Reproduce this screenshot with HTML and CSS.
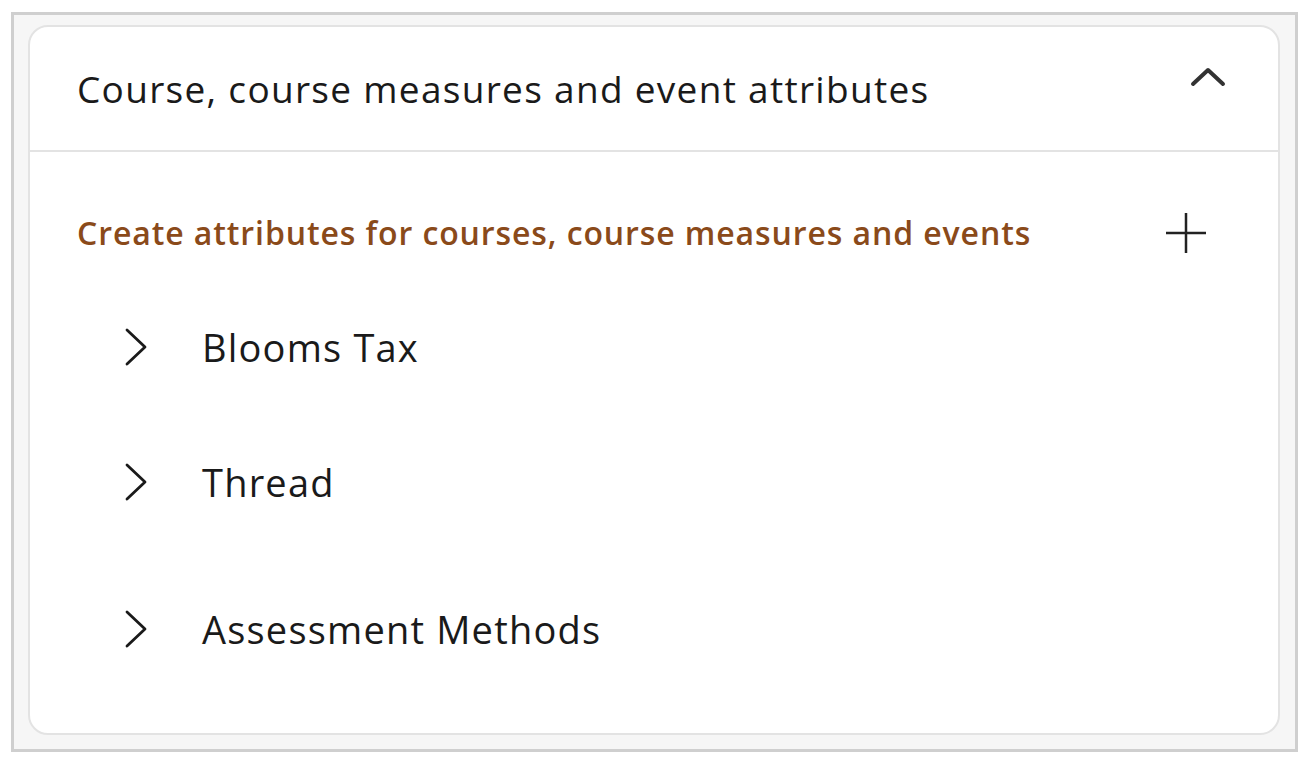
FILE: index.html
```html
<!DOCTYPE html>
<html>
<head>
<meta charset="utf-8">
<link rel="stylesheet" href="styles.css">
</head>
<body>
<div class="frame">
  <div class="card">
    <div class="card-header">
      <h2 class="title">Course, course measures and event attributes</h2>
      <svg class="chev-up" width="36" height="22" viewBox="0 0 36 22"><path d="M3 18 L18 4 L33 18" fill="none" stroke="#333" stroke-width="4" stroke-linecap="round" stroke-linejoin="round"/></svg>
    </div>
    <div class="card-body">
      <div class="sub-row">
        <span class="subtitle">Create attributes for courses, course measures and events</span>
        <svg class="plus" width="44" height="44" viewBox="0 0 44 44"><path d="M22 2 V42 M2 22 H42" fill="none" stroke="#222" stroke-width="2.5"/></svg>
      </div>
      <ul class="items">
        <li class="item item-1"><svg class="chev" width="24" height="38" viewBox="0 0 24 38"><path d="M3 2 L21 19 L3 36" fill="none" stroke="#1a1a1a" stroke-width="2.8" stroke-linecap="round" stroke-linejoin="round"/></svg><span>Blooms Tax</span></li>
        <li class="item item-2"><svg class="chev" width="24" height="38" viewBox="0 0 24 38"><path d="M3 2 L21 19 L3 36" fill="none" stroke="#1a1a1a" stroke-width="2.8" stroke-linecap="round" stroke-linejoin="round"/></svg><span>Thread</span></li>
        <li class="item item-3"><svg class="chev" width="24" height="38" viewBox="0 0 24 38"><path d="M3 2 L21 19 L3 36" fill="none" stroke="#1a1a1a" stroke-width="2.8" stroke-linecap="round" stroke-linejoin="round"/></svg><span>Assessment Methods</span></li>
      </ul>
    </div>
  </div>
</div>
</body>
</html>
```
FILE: styles.css
```css
html, body { margin: 0; padding: 0; background: #fff; }
body { padding: 12px 0 0 11px; font-family: "Open Sans", "Noto Sans", sans-serif; color: #1a1a1a; }
.frame {
  width: 1281px; height: 734px;
  border: 3px solid #cfcfcf;
  background: #f6f6f6;
  display: flex;
}
.card {
  margin: 10px 15px 14px 14px;
  flex: 1;
  background: #fff;
  border: 2px solid #e3e3e3;
  border-radius: 20px;
  display: flex; flex-direction: column;
}
.card-header {
  height: 123px;
  border-bottom: 2px solid #e3e3e3;
  display: flex; align-items: center; justify-content: space-between;
  padding: 0 52px 0 47px;
}
.title { margin: 0; font-weight: 400; font-size: 37px; line-height: 48px; letter-spacing: 1.3px; color: #1a1a1a; }
.chev-up { margin-top: -24px; }
.card-body { padding: 56px 70px 0 47px; }
.sub-row { display: flex; align-items: center; justify-content: space-between; height: 50px; }
.subtitle { font-size: 32px; line-height: 44px; letter-spacing: 0.9px; font-weight: 600; color: #8a4a1a; }
.items { list-style: none; margin: 0; padding: 0 0 0 47px; }
.item { display: flex; align-items: center; font-size: 38px; line-height: 44px; letter-spacing: 1.2px; color: #1a1a1a; }
.item .chev { margin-right: 54px; }
.item-1 { margin-top: 67px; }
.item-2 { margin-top: 91px; }
.item-3 { margin-top: 103px; }
```
